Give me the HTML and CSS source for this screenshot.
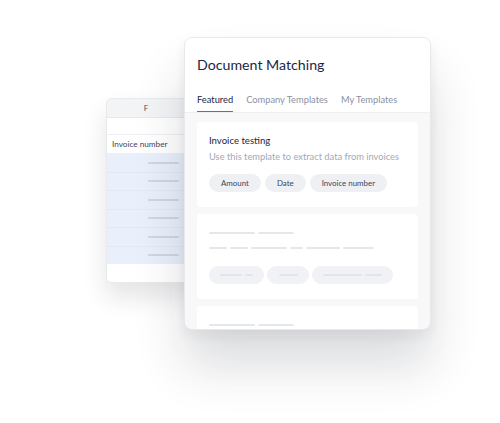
FILE: index.html
```html
<!DOCTYPE html>
<html>
<head>
<meta charset="utf-8">
<link rel="stylesheet" href="styles.css">
</head>
<body>
<div class="stage">
  <div class="sheet">
    <div class="sheet-head">F</div>
    <div class="sheet-row"></div>
    <div class="sheet-row label">Invoice number</div>
    <div class="sheet-blue">
      <div class="blue-row"><span class="bar"></span></div>
      <div class="blue-row"><span class="bar"></span></div>
      <div class="blue-row"><span class="bar"></span></div>
      <div class="blue-row"><span class="bar"></span></div>
      <div class="blue-row"><span class="bar"></span></div>
      <div class="blue-row"><span class="bar"></span></div>
    </div>
    <div class="sheet-foot"></div>
  </div>

  <div class="window">
    <div class="win-head">
      <h1 class="title">Document Matching</h1>
      <div class="tabs">
        <span class="tab active">Featured</span>
        <span class="tab">Company Templates</span>
        <span class="tab">My Templates</span>
      </div>
    </div>
    <div class="win-body">
      <div class="tcard">
        <div class="tname">Invoice testing</div>
        <div class="tdesc">Use this template to extract data from invoices</div>
        <div class="chips">
          <span class="chip">Amount</span>
          <span class="chip">Date</span>
          <span class="chip">Invoice number</span>
        </div>
      </div>
      <div class="tcard skel">
        <div class="sline">
          <span class="sb" style="width:46px"></span><span class="sb" style="width:36px"></span>
        </div>
        <div class="sline second">
          <span class="sb" style="width:18px"></span><span class="sb" style="width:18px"></span><span class="sb" style="width:36px"></span><span class="sb" style="width:13px"></span><span class="sb" style="width:34px"></span><span class="sb" style="width:31px"></span>
        </div>
        <div class="chips">
          <span class="chip schip" style="width:55px"><span class="cb" style="width:22px"></span><span class="cb" style="width:8px"></span></span>
          <span class="chip schip" style="width:42px"><span class="cb" style="width:19px"></span></span>
          <span class="chip schip" style="width:81px"><span class="cb" style="width:39px"></span><span class="cb" style="width:17px"></span></span>
        </div>
      </div>
      <div class="tcard skel last">
        <div class="sline">
          <span class="sb" style="width:46px"></span><span class="sb" style="width:36px"></span>
        </div>
      </div>
    </div>
  </div>
</div>
</body>
</html>
```

FILE: styles.css
```css
html, body {
  margin: 0;
  padding: 0;
  background: #ffffff;
  font-family: Lato, "Noto Sans", sans-serif;
}

.stage {
  width: 500px;
  height: 423px;
  display: grid;
  grid-template-columns: 1fr;
  grid-template-rows: 1fr;
  overflow: hidden;
}

.sheet, .window {
  grid-area: 1 / 1;
  align-self: start;
  justify-self: start;
}

/* left sheet */
.sheet {
  margin: 98px 0 0 106px;
  width: 92px;
  background: #ffffff;
  border: 1px solid #e9eaee;
  border-radius: 5px;
  overflow: hidden;
  box-shadow: 0 14px 24px rgba(30, 35, 50, 0.12);
  display: flex;
  flex-direction: column;
}

.sheet-head {
  height: 18px;
  background: #f3f4f6;
  border-bottom: 1px solid #e7e8ec;
  font-size: 8px;
  line-height: 18px;
  color: #4b5468;
  text-align: center;
  padding-right: 14px;
}

.sheet-row {
  height: 16px;
  border-bottom: 1px solid #eeeff2;
}

.sheet-row.label {
  height: 18px;
  font-size: 8.2px;
  line-height: 18px;
  color: #3c4660;
  padding-left: 5px;
}

.sheet-blue {
  background: #e9effb;
  height: 110px;
  display: flex;
  flex-direction: column;
}

.blue-row {
  flex: 1;
  border-bottom: 1px solid #e1e8f6;
  display: flex;
  align-items: center;
  justify-content: flex-end;
  padding-right: 20px;
}

.blue-row:last-child {
  border-bottom: none;
}

.bar {
  width: 31px;
  height: 2px;
  border-radius: 1px;
  background: #cfd6e4;
}

.sheet-foot {
  height: 18px;
}

/* main window */
.window {
  margin: 37px 0 0 184px;
  width: 247px;
  height: 293px;
  background: #f8f8f9;
  border: 1px solid #e8e9ed;
  border-radius: 8px;
  overflow: hidden;
  box-sizing: border-box;
  box-shadow: 0 36px 50px rgba(30, 35, 50, 0.16), 0 6px 12px rgba(30, 35, 50, 0.06);
  display: flex;
  flex-direction: column;
}

.win-head {
  background: #ffffff;
  padding: 18px 12px 0 12px;
  border-bottom: 1px solid #efeff2;
}

.title {
  margin: 0;
  font-size: 14.2px;
  line-height: 18px;
  font-weight: 400;
  color: #1d2742;
}

.tabs {
  margin-top: 19px;
  display: flex;
  gap: 13px;
}

.tab {
  font-size: 9.3px;
  line-height: 14px;
  color: #8b91a3;
  padding-bottom: 4px;
  border-bottom: 1.5px solid transparent;
}

.tab.active {
  color: #1d2742;
  border-bottom-color: #5b72b0;
}

.win-body {
  padding: 9px 12px 0 12px;
  display: flex;
  flex-direction: column;
  gap: 7px;
}

.tcard {
  background: #ffffff;
  border-radius: 4px;
  height: 85px;
  box-sizing: border-box;
  padding: 12px 12px 0 12px;
  flex-shrink: 0;
}

.tname {
  font-size: 9.6px;
  line-height: 14px;
  color: #1d2742;
}

.tdesc {
  margin-top: 2px;
  font-size: 9.3px;
  line-height: 14px;
  color: #a3a8b6;
}

.chips {
  margin-top: 10px;
  display: flex;
  gap: 4px;
}

.chip {
  height: 18px;
  line-height: 18px;
  padding: 0 12px;
  border-radius: 9px;
  background: #eef0f3;
  font-size: 7.9px;
  color: #3b4560;
}

.skel {
  padding-top: 18px;
}

.sline {
  display: flex;
  gap: 3px;
  height: 2px;
}

.sline.second {
  margin-top: 13px;
}

.sb {
  height: 2px;
  border-radius: 1px;
  background: #e6e7ec;
}

.skel .chips {
  margin-top: 17px;
  gap: 3px;
}

.schip {
  padding: 0;
  display: flex;
  align-items: center;
  justify-content: center;
  gap: 3px;
  background: #f1f2f5;
}

.cb {
  height: 2px;
  border-radius: 1px;
  background: #e3e4ea;
}
```
